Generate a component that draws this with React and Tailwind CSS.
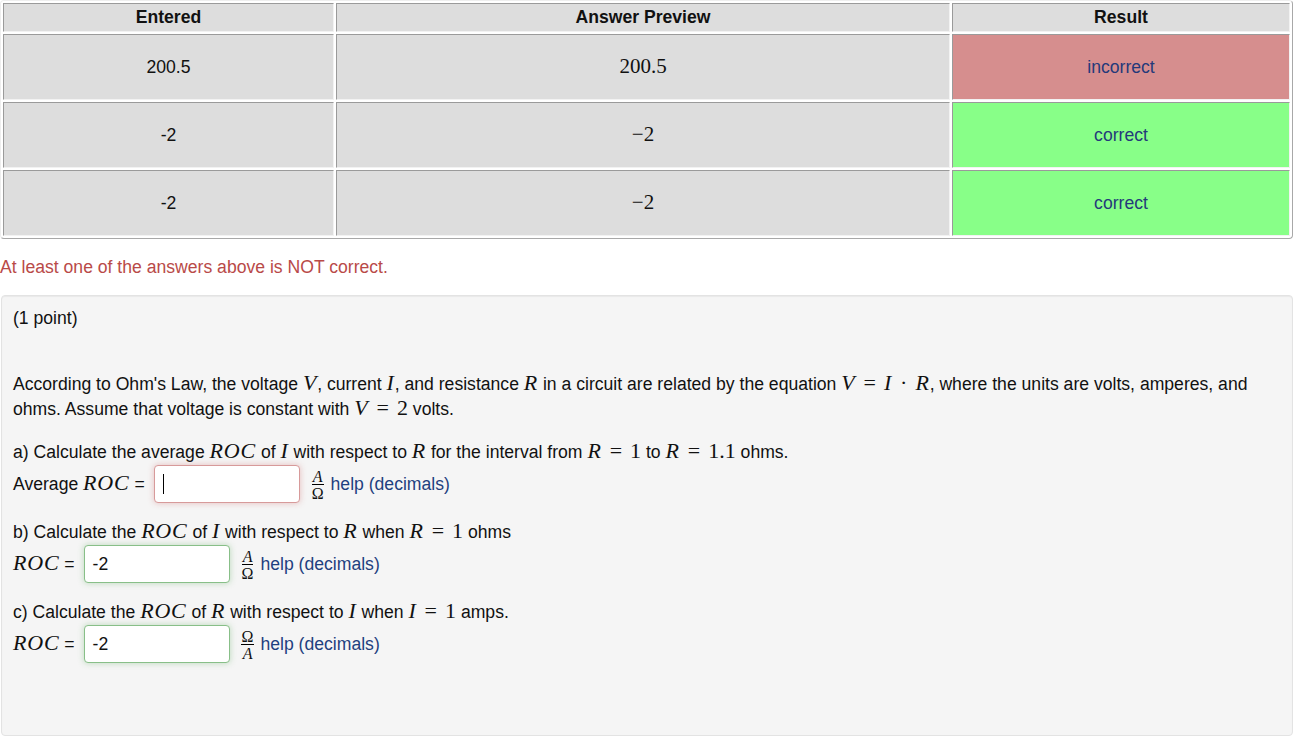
import React from "react";

const SERIF = "font-['Liberation_Serif','DejaVu_Serif',serif]";

function V({ children }) {
  return <span className={`${SERIF} italic text-[22px] tracking-[0.8px] leading-none`}>{children}</span>;
}
function N({ children }) {
  return <span className={`${SERIF} text-[22px] leading-none`}>{children}</span>;
}
function Op({ children }) {
  return <span className={`${SERIF} text-[22px] leading-none mx-[8px]`}>{children}</span>;
}
function Frac({ top, bottom, topItalic = true, bottomItalic = false }) {
  return (
    <span className={`${SERIF} inline-flex flex-col items-center align-middle text-[16px] leading-[15px] mx-[6px] relative top-[1px]`}>
      <span className={`${topItalic ? "italic" : ""} px-[1px] border-b border-black`}>{top}</span>
      <span className={`${bottomItalic ? "italic" : ""} px-[1px] pt-[1px]`}>{bottom}</span>
    </span>
  );
}
function Help() {
  return <span className="text-[#1f3f7f]">help (decimals)</span>;
}

function Cell({ children, className = "" }) {
  return (
    <td
      className={`border border-t-[#9a9a9a] border-l-[#9a9a9a] border-b-[#f2f2f2] border-r-[#f2f2f2] text-center align-middle h-[66px] ${className}`}
    >
      {children}
    </td>
  );
}

export default function App() {
  const rows = [
    { e: "200.5", p: "200.5", r: "incorrect", bg: "bg-[#d68e8e]" },
    { e: "-2", p: "\u22122", r: "correct", bg: "bg-[#88ff88]" },
    { e: "-2", p: "\u22122", r: "correct", bg: "bg-[#88ff88]" },
  ];
  return (
    <div className="font-['Liberation_Sans',Arial,sans-serif] text-[17.6px] text-[#111] bg-white min-h-[738px] w-[1296px]">
      <table className="w-[1293px] table-fixed border-separate border-spacing-[2px] border border-t-[#eeeeee] border-l-[#eeeeee] border-b-[#a8a8a8] border-r-[#a8a8a8] rounded-[4px]">
        <colgroup>
          <col className="w-[331px]" />
          <col className="w-[614px]" />
          <col />
        </colgroup>
        <thead>
          <tr>
            {["Entered", "Answer Preview", "Result"].map((h) => (
              <th
                key={h}
                className="bg-[#dddddd] font-bold text-center h-[29px] border border-t-[#9a9a9a] border-l-[#9a9a9a] border-b-[#f2f2f2] border-r-[#f2f2f2] p-0"
              >
                {h}
              </th>
            ))}
          </tr>
        </thead>
        <tbody>
          {rows.map((r, i) => (
            <tr key={i}>
              <Cell className="bg-[#dddddd]">{r.e}</Cell>
              <Cell className="bg-[#dddddd]">
                <span className={`${SERIF} text-[21px]`}>{r.p}</span>
              </Cell>
              <Cell className={`${r.bg} text-[#24397a]`}>{r.r}</Cell>
            </tr>
          ))}
        </tbody>
      </table>

      <div className="mt-[18px] h-[20px] leading-[20px] text-[#b94a48]">
        At least one of the answers above is NOT correct.
      </div>

      <div className="mt-[18px] ml-[1px] w-[1292px] h-[441px] bg-[#f5f5f5] border border-[#e3e3e3] rounded-[4px] shadow-[inset_0_1px_1px_rgba(0,0,0,0.05)] px-[11px] pt-[12px]">
        <div className="leading-[20px]">(1 point)</div>

        <div className="mt-[44px] leading-[25px]">
          According to Ohm's Law, the voltage <V>V</V>, current <V>I</V>, and resistance <V>R</V> in a circuit are
          related by the equation <V>V</V>
          <Op>=</Op>
          <V>I</V>
          <Op>·</Op>
          <V>R</V>, where the units are volts, amperes, and ohms. Assume that voltage is constant with <V>V</V>
          <Op>=</Op>
          <N>2</N> volts.
        </div>

        <div className="mt-[18px] h-[24px] leading-[24px]">
          a) Calculate the average <V>ROC</V> of <V>I</V> with respect to <V>R</V> for the interval from <V>R</V>
          <Op>=</Op>
          <N>1</N> to <V>R</V>
          <Op>=</Op>
          <N>1.1</N> ohms.
        </div>
        <div className="mt-[1px] flex items-center h-[38px]">
          <span>
            Average <V>ROC</V> =
          </span>
          <div className="ml-[9px] w-[146px] h-[38px] bg-white border border-[#d79a9a] rounded-[4px] shadow-[0_0_6px_rgba(210,120,120,0.45)] flex items-center px-[8px]">
            <span className="w-[1px] h-[20px] bg-black" />
          </div>
          <span className="ml-[5px]">
            <Frac top="A" bottom="Ω" />
          </span>
          <Help />
        </div>

        <div className="mt-[17px] h-[24px] leading-[24px]">
          b) Calculate the <V>ROC</V> of <V>I</V> with respect to <V>R</V> when <V>R</V>
          <Op>=</Op>
          <N>1</N> ohms
        </div>
        <div className="mt-[1px] flex items-center h-[38px]">
          <span>
            <V>ROC</V> =
          </span>
          <div className="ml-[9px] w-[146px] h-[38px] bg-white border border-[#88bf88] rounded-[4px] shadow-[0_0_6px_rgba(110,180,110,0.45)] flex items-center px-[8px]">
            -2
          </div>
          <span className="ml-[5px]">
            <Frac top="A" bottom="Ω" />
          </span>
          <Help />
        </div>

        <div className="mt-[17px] h-[24px] leading-[24px]">
          c) Calculate the <V>ROC</V> of <V>R</V> with respect to <V>I</V> when <V>I</V>
          <Op>=</Op>
          <N>1</N> amps.
        </div>
        <div className="mt-[1px] flex items-center h-[38px]">
          <span>
            <V>ROC</V> =
          </span>
          <div className="ml-[9px] w-[146px] h-[38px] bg-white border border-[#88bf88] rounded-[4px] shadow-[0_0_6px_rgba(110,180,110,0.45)] flex items-center px-[8px]">
            -2
          </div>
          <span className="ml-[5px]">
            <Frac top="Ω" bottom="A" topItalic={false} bottomItalic={true} />
          </span>
          <Help />
        </div>
      </div>
    </div>
  );
}
